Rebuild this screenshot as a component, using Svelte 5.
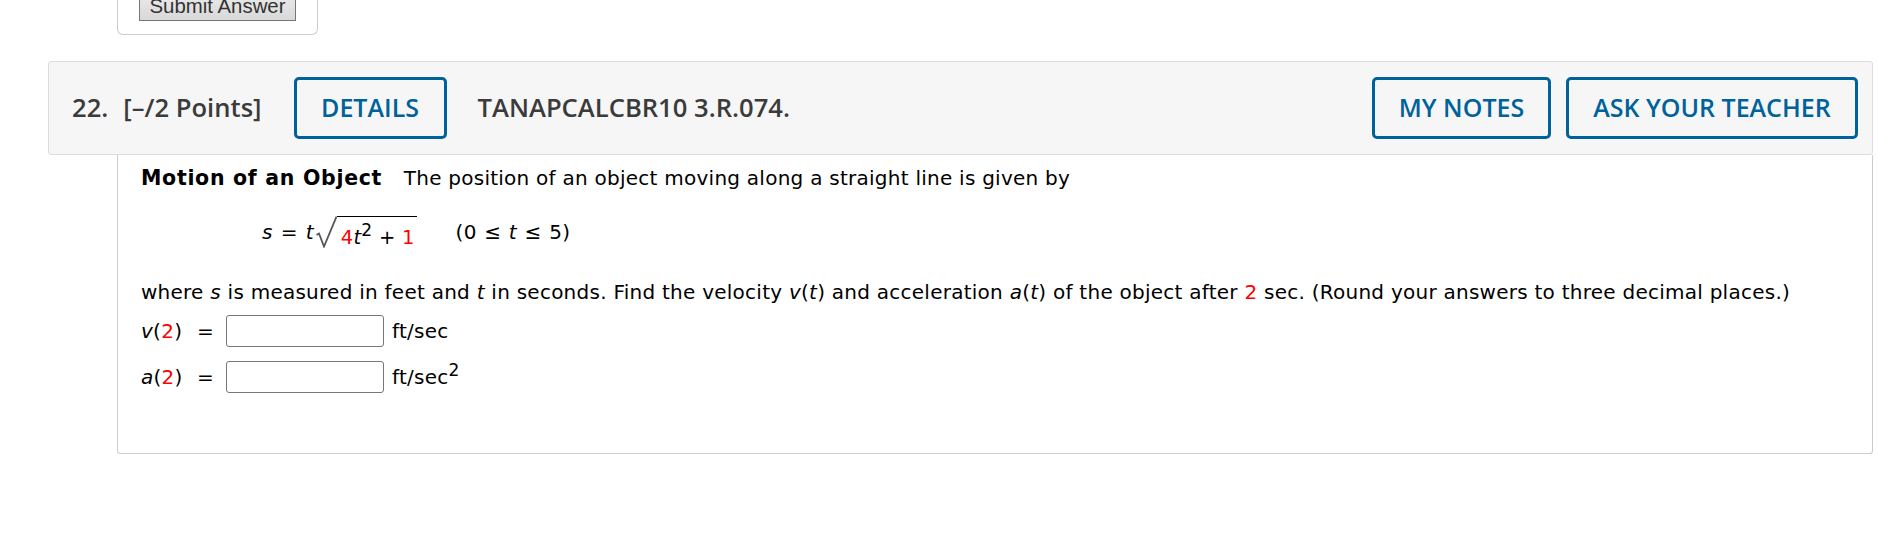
<script>
	const rows = [
		{ name: "v", unit: "ft/sec", power: "" },
		{ name: "a", unit: "ft/sec", power: "2" },
	];
</script>

<div class="page">
	<div class="prev">
		<button class="submit" type="button">Submit Answer</button>
	</div>

	<section class="question">
		<header class="head">
			<span class="num">22.</span>
			<span class="points">[–/2 Points]</span>
			<button class="action details" type="button">DETAILS</button>
			<span class="code">TANAPCALCBR10 3.R.074.</span>
			<div class="right">
				<button class="action notes" type="button">MY NOTES</button>
				<button class="action ask" type="button">ASK YOUR TEACHER</button>
			</div>
		</header>

		<div class="body">
			<p class="intro">
				<b>Motion of an Object</b>
				<span class="lead">The position of an object moving along a straight line is given by</span>
			</p>

			<div class="formula">
				<i>s</i><span class="eq">=</span><i>t</i>
				<span class="root">
					<svg class="radical" viewBox="0 0 21 32" width="21" height="32" aria-hidden="true">
						<path d="M0.5 19 L3 17.5 L8 30.5 L20.5 0.5" fill="none" stroke="#555" stroke-width="1.8" />
					</svg>
					<span class="radicand"><span class="red">4</span><i>t</i><sup>2</sup> + <span class="red">1</span></span>
				</span>
				<span class="range">(0 ≤ <i>t</i> ≤ 5)</span>
			</div>

			<p class="where">
				where <i>s</i> is measured in feet and <i>t</i> in seconds. Find the velocity <i>v</i>(<i>t</i>) and acceleration <i>a</i>(<i>t</i>) of the object after <span class="red">2</span> sec. (Round your answers to three decimal places.)
			</p>

			{#each rows as row}
				<div class="answer">
					<span class="label"><i>{row.name}</i>(<span class="red">2</span>)</span>
					<span class="equals">=</span>
					<input type="text" />
					<span class="unit">{row.unit}{#if row.power}<sup>{row.power}</sup>{/if}</span>
				</div>
			{/each}
		</div>
	</section>
</div>

<style>
	:global(body) {
		background: #fff;
	}

	.page {
		height: 535px;
		overflow: hidden;
		padding: 0 5px 0 48px;
	}

	.prev {
		display: flex;
		flex-direction: column;
		justify-content: flex-end;
		box-sizing: border-box;
		width: 201px;
		height: 35px;
		margin-left: 69px;
		padding: 0 21px 13px 21px;
		border: 1px solid #ccc;
		border-top: 0;
		border-radius: 0 0 6px 6px;
	}

	.submit {
		flex: none;
		box-sizing: border-box;
		width: 157px;
		height: 30px;
		padding: 0;
		border: 1px solid #767676;
		background: linear-gradient(#ececec, #d8d8d8);
		color: #333;
		font: 20.4px "Liberation Sans", sans-serif;
	}

	.question {
		margin-top: 26px;
	}

	.head {
		display: flex;
		align-items: center;
		box-sizing: border-box;
		height: 94px;
		padding: 0 14px 1px 23px;
		border: 1px solid #ddd;
		border-radius: 3px;
		background: #f6f6f6;
		color: #3b3b3b;
		font: 600 25.6px "Open Sans", sans-serif;
	}

	.points {
		margin-left: 15px;
	}

	.action {
		box-sizing: border-box;
		height: 62px;
		padding: 0 0 1px;
		border: 3.5px solid #00629b;
		border-radius: 5px;
		background: transparent;
		color: #00629b;
		font: 600 25px "Open Sans", sans-serif;
	}

	.details {
		width: 153px;
		margin-left: 32px;
	}

	.code {
		margin-left: 31px;
	}

	.right {
		display: flex;
		gap: 15px;
		margin-left: auto;
	}

	.notes {
		width: 179px;
	}

	.ask {
		width: 292px;
	}

	.body {
		box-sizing: border-box;
		height: 299px;
		margin-left: 69px;
		padding: 8px 23px 0;
		border: 1px solid #ccc;
		border-top: 0;
		border-radius: 0 0 3px 3px;
		color: #000;
		font: 20px/30px "DejaVu Sans", Verdana, sans-serif;
		letter-spacing: 0.25px;
	}

	p {
		margin: 0;
	}

	b {
		font-size: 20.5px;
		letter-spacing: 0.7px;
	}

	.lead {
		margin-left: 15px;
	}

	.red {
		color: #f00;
	}

	.formula {
		display: flex;
		align-items: center;
		height: 32px;
		margin: 23px 0 0 121px;
		white-space: pre;
	}

	.eq {
		margin: 0 8px;
	}

	.root {
		display: flex;
		height: 32px;
		margin-left: 2px;
	}

	.radicand {
		box-sizing: border-box;
		height: 32px;
		padding: 11px 2px 0 4px;
		border-top: 1px solid #000;
		font-size: 19.5px;
		line-height: 20px;
	}

	sup {
		font-size: 17px;
		line-height: 0;
		vertical-align: 8px;
	}

	.range {
		margin-left: 39px;
		word-spacing: 1px;
	}

	.where {
		margin-top: 29px;
	}

	.answer {
		display: flex;
		align-items: center;
		height: 32px;
		margin-top: 8px;
	}

	.answer + .answer {
		margin-top: 14px;
	}

	.label {
		width: 56px;
	}

	.equals {
		width: 29px;
	}

	input {
		box-sizing: border-box;
		width: 158px;
		height: 32px;
		padding: 0;
		border: 1px solid #767676;
		border-radius: 3px;
		background: #fff;
	}

	.unit {
		margin-left: 8px;
	}
</style>
